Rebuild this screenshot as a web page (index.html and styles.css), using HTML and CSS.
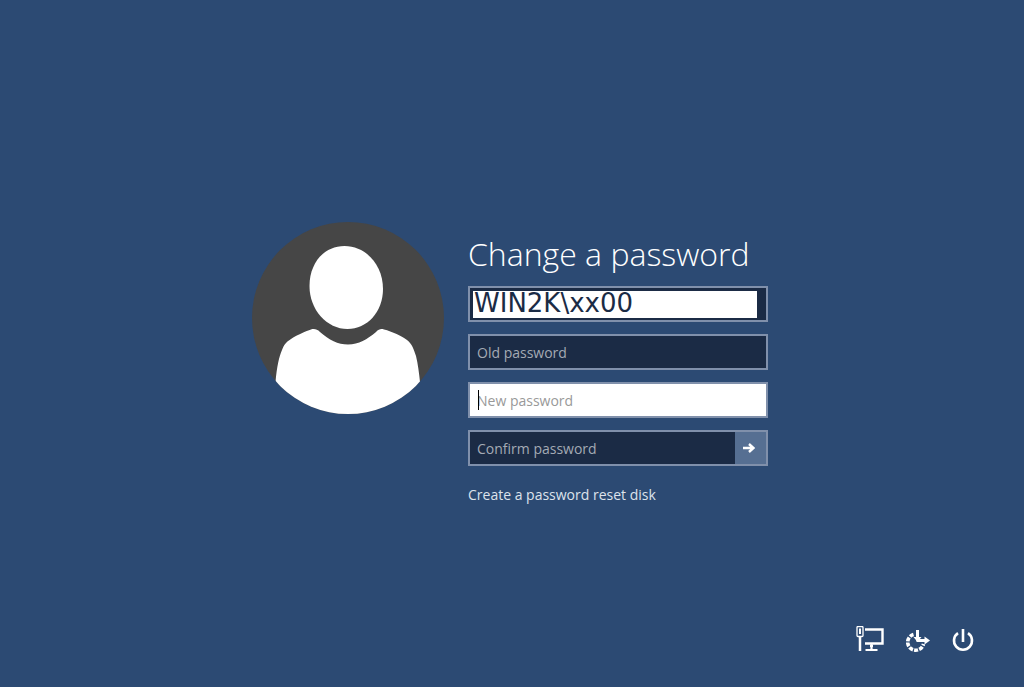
FILE: index.html
```html
<!DOCTYPE html>
<html lang="en">
<head>
<meta charset="UTF-8">
<meta name="viewport" content="width=device-width, initial-scale=1.0">
<title>Change a password</title>
<link rel="stylesheet" href="styles.css">
</head>
<body>
<main class="screen">
<svg class="avatar" viewBox="0 0 192 192" aria-hidden="true">
<defs>
<clipPath id="avatar-clip"><circle cx="96" cy="96" r="96"/></clipPath>
</defs>
<g clip-path="url(#avatar-clip)">
<rect width="192" height="192" fill="#464646"/>
<path fill="#fff" d="M92.500 24C114 24 131 43 131 67C131 90 115 107 95.500 107C75 107 57.500 88 57.500 64C57.500 41 72 24 92.500 24Z"/>
<path fill="#fff" d="M23.500 160C25 144 27 135 30 128C32 123 34 120 39 117C46 112.500 54 109 59 107.500C62 106.500 65 107 68 110C77 118 86 122.500 96 122.500C107 122.500 115 117.500 124 110C127 107 129 106.500 132 107.500C140 109.500 150 114 155 118C160 121.500 162 128 164 134C166 142 167 151 168 160V192H23.500Z"/>
</g>
</svg>

<form class="form">
<h1>Change a password</h1>
<div class="field user">
<input type="text" value="WIN2K\xx00" aria-label="User name">
</div>
<div class="field">
<input type="password" placeholder="Old password" aria-label="Old password">
</div>
<div class="field active">
<input type="password" placeholder="New password" aria-label="New password">
</div>
<div class="field">
<input type="password" placeholder="Confirm password" aria-label="Confirm password">
<button type="submit" class="submit" aria-label="Submit">
<svg width="12" height="10" viewBox="0 0 12 10" fill="none" stroke="#fff" stroke-width="2.400"><path d="M0 5H10.500M6 1L10.500 5L6 9"/></svg>
</button>
</div>
<a class="reset" href="#">Create a password reset disk</a>
</form>
</main>

<footer class="tools">
<button type="button" aria-label="Network">
<svg width="28" height="28" viewBox="0 0 28 28" fill="none" stroke="#fff">
<rect x="1" y="0.500" width="6" height="10" rx="1" stroke-width="1.300"/>
<path d="M3 2.500H5V8H3Z" fill="#fff" stroke="none"/>
<path d="M4 10V25" stroke-width="2.500"/>
<path d="M9 3.500H26.500V17.500H9" stroke-width="2.400"/>
<path d="M15.500 18V23.500M9.500 24H21.500" stroke-width="2.200"/>
<path d="M14 20H17" stroke-width="2"/>
</svg>
</button>
<button type="button" aria-label="Ease of access">
<svg width="24" height="28" viewBox="0 0 24 28" fill="none" stroke="#fff">
<path d="M7.500 8.500A8 8 0 1 0 17.500 18" stroke-width="3.600" stroke-dasharray="4 1.200"/>
<path d="M11.500 4V14.500M10.500 14.500H20" stroke-width="3"/>
<path d="M7.500 11H15.500L11.500 16ZM18.500 10.500L24 14.500L18.500 18.500Z" fill="#fff" stroke="none"/>
</svg>
</button>
<button type="button" aria-label="Power">
<svg width="22" height="28" viewBox="0 0 22 28" fill="none" stroke="#fff" stroke-width="2.600">
<path d="M6 7.200A9 9 0 1 0 16 7.200M11 3V16"/>
</svg>
</button>
</footer>
</body>
</html>
```

FILE: styles.css
```css
:root {
--bg-color: #2c4a73;
--field-color: #1b2b45;
--border-color: #8090ab;
--button-color: #566f92;
}

* {
box-sizing: border-box;
}

body {
margin: 0;
min-height: 100vh;
display: flex;
flex-direction: column;
background-color: var(--bg-color);
color: white;
font-family: "Open Sans", "Noto Sans", sans-serif;
}

.screen {
flex: 1;
display: flex;
justify-content: center;
align-content: center;
flex-wrap: wrap;
align-items: flex-start;
gap: 24px;
padding: 102px 28px 0 24px;
}

.avatar {
width: 192px;
height: 192px;
}

.form {
width: 300px;
display: flex;
flex-direction: column;
gap: 12px;
padding-top: 12px;
}

h1 {
margin: 0;
font-size: 32px;
font-weight: 300;
line-height: 40px;
white-space: nowrap;
}

.field {
position: relative;
display: flex;
height: 36px;
border: 2px solid var(--border-color);
background: var(--field-color);
}

.field input {
flex: 1;
min-width: 0;
border: none;
outline: none;
padding: 0 7px;
background: transparent;
color: white;
font-family: inherit;
font-size: 14px;
}

.field input::placeholder {
color: #a4aab4;
opacity: 1;
}

.user {
padding: 3px 9px 2px 3px;
}

.user input {
padding: 0 1px 4px;
background: white;
color: var(--field-color);
font-family: "DejaVu Sans", sans-serif;
font-size: 26px;
line-height: 24px;
}

.active {
background: white;
}

.active input {
color: black;
}

.active input::placeholder {
color: #999;
}

/* text cursor */
.active::before {
content: "";
position: absolute;
left: 8px;
top: 6px;
width: 1px;
height: 20px;
background: black;
}

.submit {
width: 31px;
border: none;
padding: 0 4px 0 0;
display: flex;
align-items: center;
justify-content: center;
background: var(--button-color);
cursor: pointer;
}

.reset {
margin-top: 6px;
color: #dde3ec;
font-size: 14px;
line-height: 22px;
text-decoration: none;
}

.tools {
display: flex;
justify-content: flex-end;
gap: 22px;
padding: 0 50px 33px;
}

.tools button {
display: flex;
border: none;
padding: 0;
background: none;
cursor: pointer;
}
```
